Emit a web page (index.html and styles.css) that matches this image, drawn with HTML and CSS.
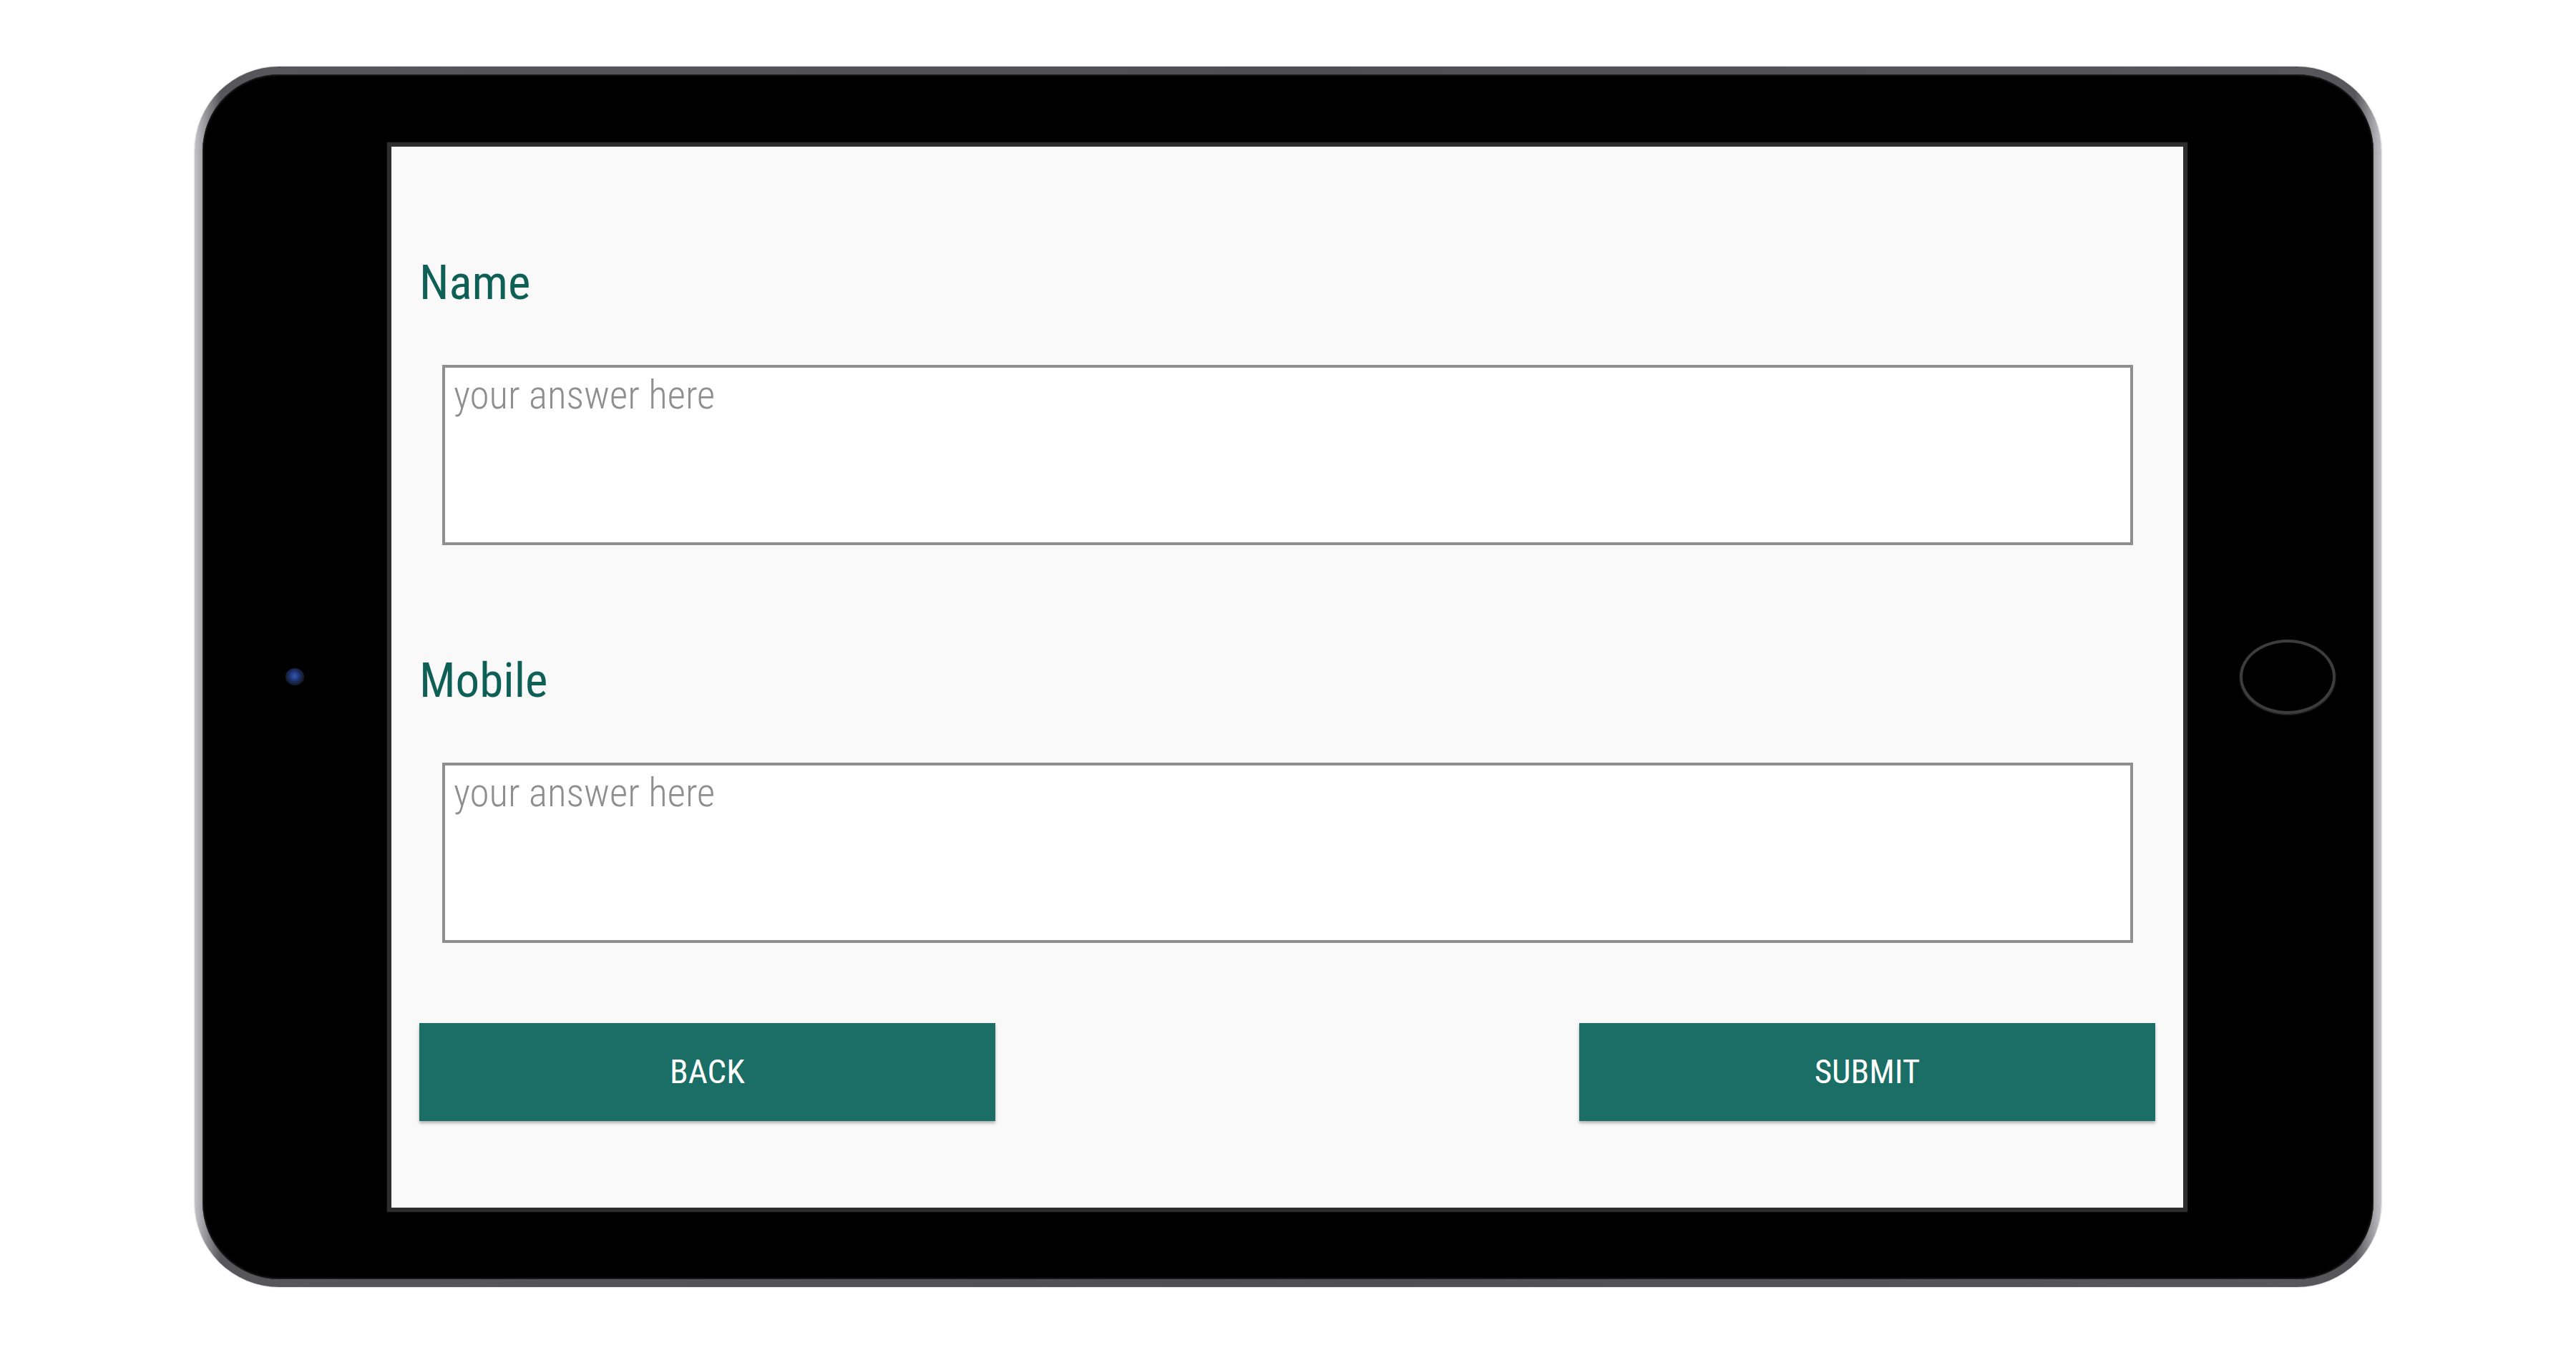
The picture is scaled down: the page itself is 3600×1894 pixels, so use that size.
FILE: index.html
```html
<!DOCTYPE html>
<html lang="en">
<head>
<meta charset="utf-8">
<title>Form</title>
<link rel="stylesheet" href="styles.css">
</head>
<body>
<div class="stage">
  <div class="tablet">
    <div class="bezel">
      <div class="camera"></div>
      <div class="screen">
        <div class="field">
          <label class="label" for="name">Name</label>
          <textarea id="name" class="answer" placeholder="your answer here"></textarea>
        </div>
        <div class="field field-second">
          <label class="label" for="mobile">Mobile</label>
          <textarea id="mobile" class="answer" placeholder="your answer here"></textarea>
        </div>
        <div class="actions">
          <button class="btn">BACK</button>
          <button class="btn">SUBMIT</button>
        </div>
      </div>
      <div class="home"></div>
    </div>
  </div>
</div>
</body>
</html>
```
FILE: styles.css
```css
html, body {
  margin: 0;
  padding: 0;
  background: #ffffff;
}
.stage {
  width: 3600px;
  height: 1894px;
  display: flex;
  align-items: center;
  justify-content: center;
}
.tablet {
  width: 3056px;
  height: 1706px;
  box-sizing: border-box;
  padding: 11px;
  border-radius: 118px;
  background: linear-gradient(to right, #c4c4c8 0%, #56565b 1.2%, #4e4e53 50%, #56565b 98.8%, #c4c4c8 100%);
  box-shadow: 0 0 2px rgba(0,0,0,0.35);
  margin-top: -2px;
}
.bezel {
  height: 100%;
  box-sizing: border-box;
  border-radius: 107px;
  background: #000;
  box-shadow: inset 0 0 3px 1px #2a2a2a;
  display: flex;
  align-items: center;
  padding-left: 116px;
}
.camera {
  width: 26px;
  height: 24px;
  border-radius: 50%;
  background: radial-gradient(circle at 48% 45%, #3559b5 0%, #1b2f68 40%, #141a26 68%, #3a3a34 88%, #0a0a0a 100%);
  flex: none;
}
.screen {
  margin-left: 116px;
  flex: none;
  border: 6px solid #2d2d2d;
  box-shadow: 0 0 3px #1c1c1c;
  background: #f9f9f9;
  padding: 156px 39px 0 39px;
  box-sizing: border-box;
  width: 2516px;
  height: 1495px;
  display: flex;
  flex-direction: column;
  font-family: "Liberation Sans Narrow", "Roboto Condensed", "DejaVu Sans Condensed", "Liberation Sans", sans-serif;
  font-weight: 400;
}
.field {
  display: flex;
  flex-direction: column;
}
.field-second {
  margin-top: 155px;
}
.label {
  font-size: 67px;
  line-height: 68px;
  height: 68px;
  color: #0e5f55;
  margin-bottom: 81px;
}
.answer {
  display: block;
  margin: 0 31px 0 32px;
  height: 252px;
  box-sizing: border-box;
  border: 4px solid #8f8f8f;
  border-radius: 0;
  background: #ffffff;
  resize: none;
  outline: none;
  padding: 10px 12px;
  font-family: inherit;
  font-weight: 300;
  font-size: 55px;
  line-height: 56px;
  color: #333;
}
.answer::placeholder {
  color: #8e8e8e;
  opacity: 1;
}
.actions {
  margin-top: 112px;
  display: flex;
  justify-content: space-between;
}
.btn {
  width: 805px;
  height: 137px;
  border: none;
  border-radius: 0;
  background: #1a6e65;
  color: #ffffff;
  font-family: inherit;
  font-weight: 400;
  font-size: 47px;
  line-height: 48px;
  padding: 0;
  box-shadow: 0 3px 4px rgba(0,0,0,0.28);
}
.home {
  margin-left: 73px;
  width: 134px;
  height: 104px;
  flex: none;
  box-sizing: border-box;
  border-radius: 50%;
  border: 4px solid #3d3d3f;
  box-shadow: 0 1px 2px rgba(120,120,125,0.5), inset 0 0 2px rgba(0,0,0,0.8);
}
```
